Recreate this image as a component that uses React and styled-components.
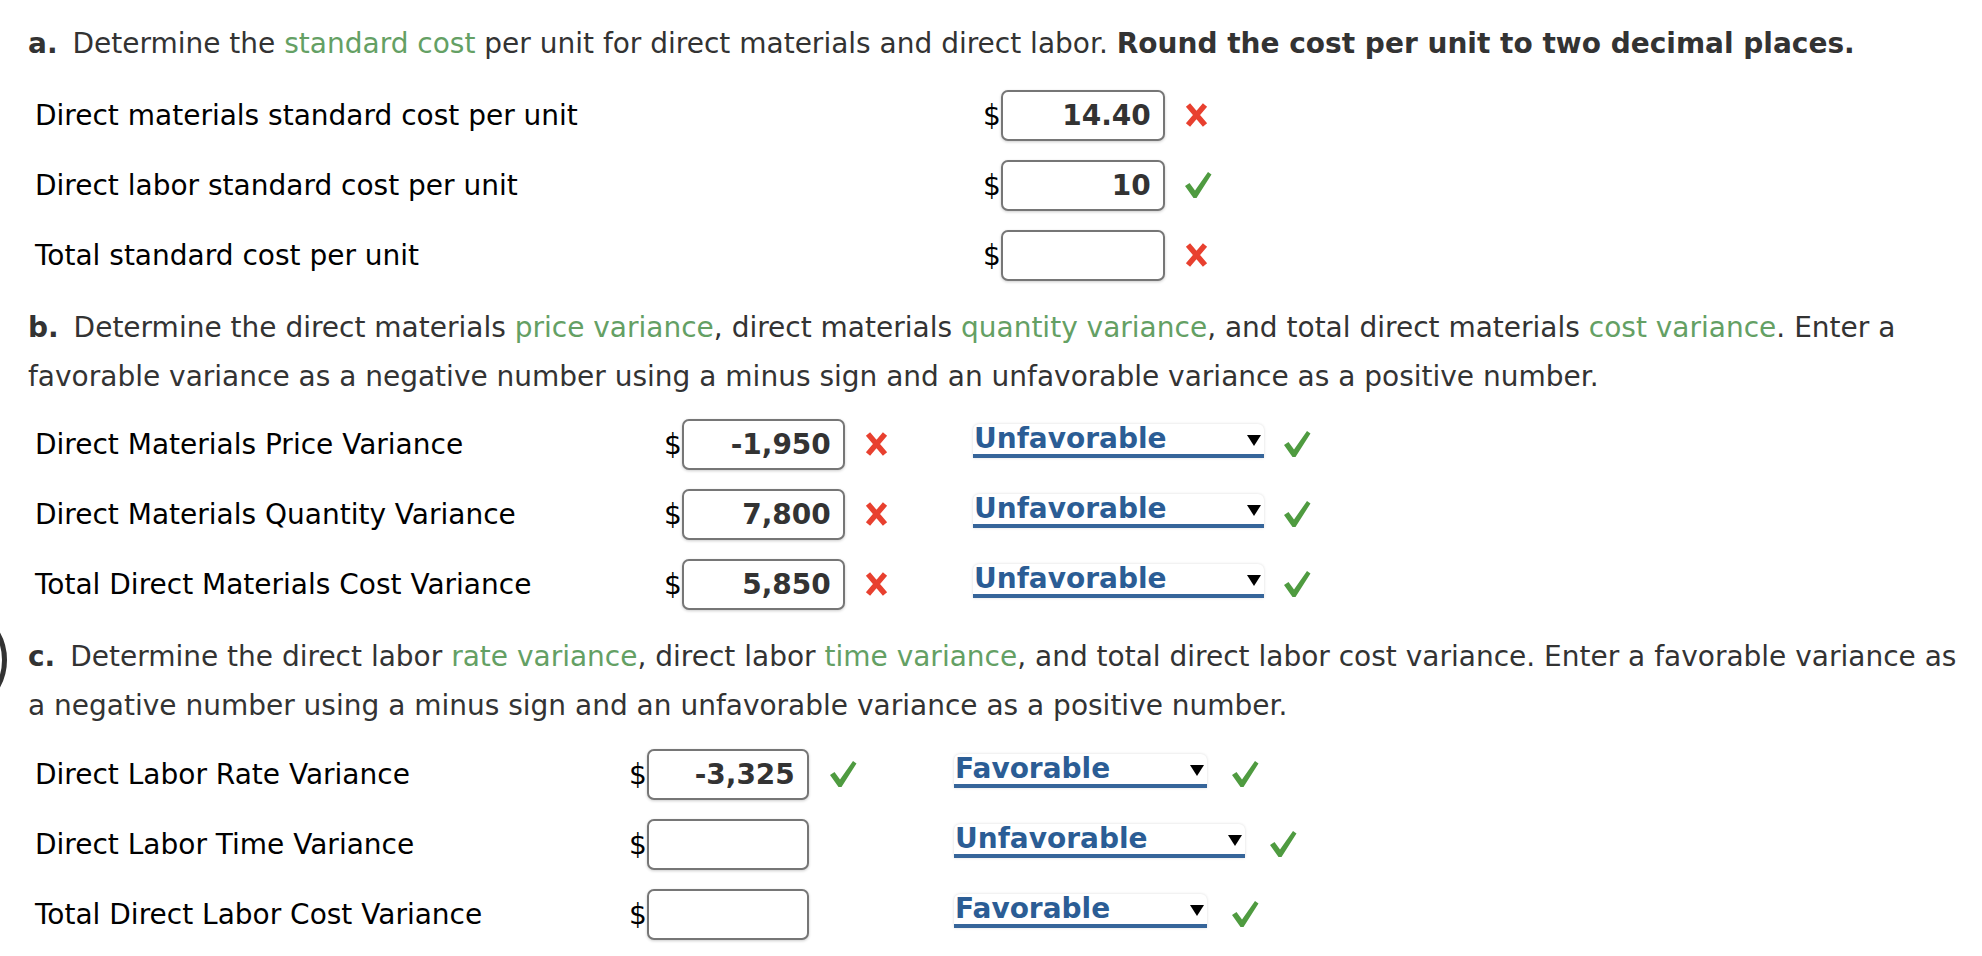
import React from "react";
import styled, { createGlobalStyle } from "styled-components";

const Global = createGlobalStyle`
  html, body { margin: 0; padding: 0; background: #fff; }
  body { font-family: "DejaVu Sans", Verdana, sans-serif; }
`;

const Page = styled.div`
  position: relative;
  width: 1982px;
  height: 956px;
  overflow: hidden;
  padding: 19px 0 0 28px;
  box-sizing: border-box;
  background: #fff;
`;

const EdgeRing = styled.div`
  position: absolute;
  left: -105px;
  top: 604px;
  width: 112px;
  height: 112px;
  border-radius: 50%;
  border: 5px solid #333;
  box-sizing: border-box;
`;

const Section = styled.section`
  margin-bottom: 13px;
`;

const Heading = styled.p`
  margin: 0 0 ${(p) => p.$gap}px 0;
  font-size: 28px;
  line-height: 49px;
  color: #333;
  width: ${(p) => p.$width || "auto"};
`;

const Letter = styled.b`
  font-weight: bold;
  margin-right: 6px;
`;

const Term = styled.span`
  color: #64a064;
`;

const Strong = styled.b`
  font-weight: bold;
`;

const Rows = styled.div`
  display: grid;
  grid-template-columns: ${(p) => p.$cols};
  grid-auto-rows: 70px;
  align-items: center;
  padding-left: 7px;
`;

const Label = styled.div`
  font-size: 28px;
  color: #000;
`;

const Money = styled.div`
  display: flex;
  align-items: center;
`;

const Dollar = styled.span`
  font-size: 28px;
  color: #000;
`;

const Field = styled.input`
  width: ${(p) => p.$w}px;
  height: 51px;
  box-sizing: border-box;
  border: 2px solid #767676;
  border-radius: 7px;
  box-shadow: 0 1px 3px rgba(0, 0, 0, 0.2);
  font-family: "DejaVu Sans", Verdana, sans-serif;
  font-size: 28px;
  font-weight: bold;
  color: #333;
  text-align: right;
  padding: 0 12px 0 4px;
  background: #fff;
  outline: none;
`;

const Mark = styled.span`
  display: flex;
  align-items: center;
`;

const Select = styled.div`
  display: inline-flex;
  align-items: center;
  justify-self: start;
  height: 34px;
  margin-top: -6px;
  padding: 0 3px 0 1px;
  box-sizing: border-box;
  background: #fff;
  border-radius: 6px 6px 0 0;
  border-bottom: 4px solid #36659a;
  box-shadow: 0 0 3px rgba(0, 0, 0, 0.15);
  font-size: 28px;
  font-weight: bold;
  color: #2b5d95;
  line-height: 30px;
`;

const SelectText = styled.span`
  margin-right: 80px;
`;

const Arrow = styled.span`
  width: 0;
  height: 0;
  border-left: 7.5px solid transparent;
  border-right: 7.5px solid transparent;
  border-top: 11px solid #000;
  margin-top: 2px;
`;

const SelectCell = styled.div`
  display: flex;
  align-items: center;
  gap: ${(p) => p.$gap}px;
`;

function Cross() {
  return (
    <svg width="23" height="24" viewBox="0 0 23 24">
      <path
        d="M3 2 L20 22 M20 2 L3 22"
        stroke="#e8402f"
        strokeWidth="5.5"
        fill="none"
      />
    </svg>
  );
}

function Check() {
  return (
    <svg width="27" height="28" viewBox="0 0 27 28">
      <path
        d="M0 15 L4.5 12 L10 19.5 L23 1 L26.5 3.5 L11.5 27 L8.5 27 Z"
        fill="#4f9b40"
      />
    </svg>
  );
}

function Dropdown({ value, gap }) {
  return (
    <SelectCell $gap={gap}>
      <Select>
        <SelectText>{value}</SelectText>
        <Arrow />
      </Select>
      <Check />
    </SelectCell>
  );
}

function MoneyField({ value, w }) {
  return (
    <Money>
      <Dollar>$</Dollar>
      <Field readOnly value={value} $w={w} />
    </Money>
  );
}

export default function App() {
  return (
    <Page>
      <Global />
      <EdgeRing />
      <Section>
        <Heading $gap={12}>
          <Letter>a.</Letter> Determine the <Term>standard cost</Term> per unit
          for direct materials and direct labor.{" "}
          <Strong>Round the cost per unit to two decimal places.</Strong>
        </Heading>
        <Rows $cols="948px 202px auto">
          <Label>Direct materials standard cost per unit</Label>
          <MoneyField value="14.40" w={164} />
          <Mark><Cross /></Mark>

          <Label>Direct labor standard cost per unit</Label>
          <MoneyField value="10" w={164} />
          <Mark><Check /></Mark>

          <Label>Total standard cost per unit</Label>
          <MoneyField value="" w={164} />
          <Mark><Cross /></Mark>
        </Rows>
      </Section>

      <Section>
        <Heading $width="1900px" $gap={8}>
          <Letter>b.</Letter> Determine the direct materials{" "}
          <Term>price variance</Term>, direct materials{" "}
          <Term>quantity variance</Term>, and total direct materials{" "}
          <Term>cost variance</Term>. Enter a favorable variance as a negative
          number using a minus sign and an unfavorable variance as a positive
          number.
        </Heading>
        <Rows $cols="629px 201px 108px auto">
          <Label>Direct Materials Price Variance</Label>
          <MoneyField value="-1,950" w={163} />
          <Mark><Cross /></Mark>
          <Dropdown value="Unfavorable" gap={20} />

          <Label>Direct Materials Quantity Variance</Label>
          <MoneyField value="7,800" w={163} />
          <Mark><Cross /></Mark>
          <Dropdown value="Unfavorable" gap={20} />

          <Label>Total Direct Materials Cost Variance</Label>
          <MoneyField value="5,850" w={163} />
          <Mark><Cross /></Mark>
          <Dropdown value="Unfavorable" gap={20} />
        </Rows>
      </Section>

      <Section>
        <Heading $width="1950px" $gap={9}>
          <Letter>c.</Letter> Determine the direct labor{" "}
          <Term>rate variance</Term>, direct labor <Term>time variance</Term>,
          and total direct labor cost variance. Enter a favorable variance as a
          negative number using a minus sign and an unfavorable variance as a
          positive number.
        </Heading>
        <Rows $cols="594px 201px 124px auto">
          <Label>Direct Labor Rate Variance</Label>
          <MoneyField value="-3,325" w={162} />
          <Mark><Check /></Mark>
          <Dropdown value="Favorable" gap={25} />

          <Label>Direct Labor Time Variance</Label>
          <MoneyField value="" w={162} />
          <Mark />
          <Dropdown value="Unfavorable" gap={25} />

          <Label>Total Direct Labor Cost Variance</Label>
          <MoneyField value="" w={162} />
          <Mark />
          <Dropdown value="Favorable" gap={25} />
        </Rows>
      </Section>
    </Page>
  );
}
